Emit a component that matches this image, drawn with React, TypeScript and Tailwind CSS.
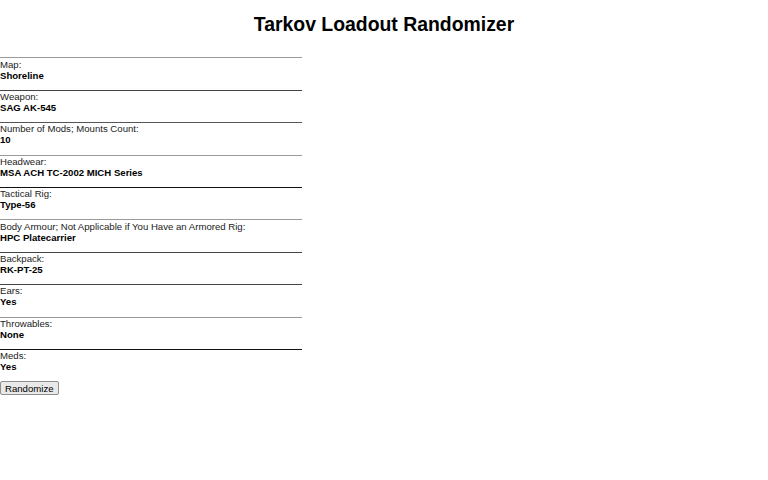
const font = "font-['Liberation_Sans',Arial,sans-serif]";

const rows: { label: string; value: string; line: string }[] = [
  { label: "Map:", value: "Shoreline", line: "border-[#9a9a9a]" },
  { label: "Weapon:", value: "SAG AK-545", line: "border-[#444]" },
  { label: "Number of Mods; Mounts Count:", value: "10", line: "border-[#555]" },
  { label: "Headwear:", value: "MSA ACH TC-2002 MICH Series", line: "border-[#9a9a9a]" },
  { label: "Tactical Rig:", value: "Type-56", line: "border-[#111]" },
  { label: "Body Armour; Not Applicable if You Have an Armored Rig:", value: "HPC Platecarrier", line: "border-[#9a9a9a]" },
  { label: "Backpack:", value: "RK-PT-25", line: "border-[#444]" },
  { label: "Ears:", value: "Yes", line: "border-[#444]" },
  { label: "Throwables:", value: "None", line: "border-[#9a9a9a]" },
  { label: "Meds:", value: "Yes", line: "border-[#111]" },
];

export default function App() {
  return (
    <div className={`${font} bg-white text-black min-h-[480px]`}>
      <h1 className="text-center text-[19.4px] font-bold leading-[22px] pt-[13.3px]">Tarkov Loadout Randomizer</h1>

      <div className="w-[302px] mt-[22.1px]">
        {rows.map((row) => (
          <div key={row.label} className={`h-[32.4px] border-t ${row.line}`}>
            <div className="text-[9.6px] leading-[11px] pt-[0.2px] text-[#222]">{row.label}</div>
            <div className="text-[9.6px] leading-[11px] font-bold">{row.value}</div>
          </div>
        ))}
      </div>

      <button className="block h-[14px] text-[9.6px] leading-[11px] px-[4px] bg-[#e9e9e9] border border-[#8f8f8f] rounded-[2px] text-black">
        Randomize
      </button>
    </div>
  );
}
